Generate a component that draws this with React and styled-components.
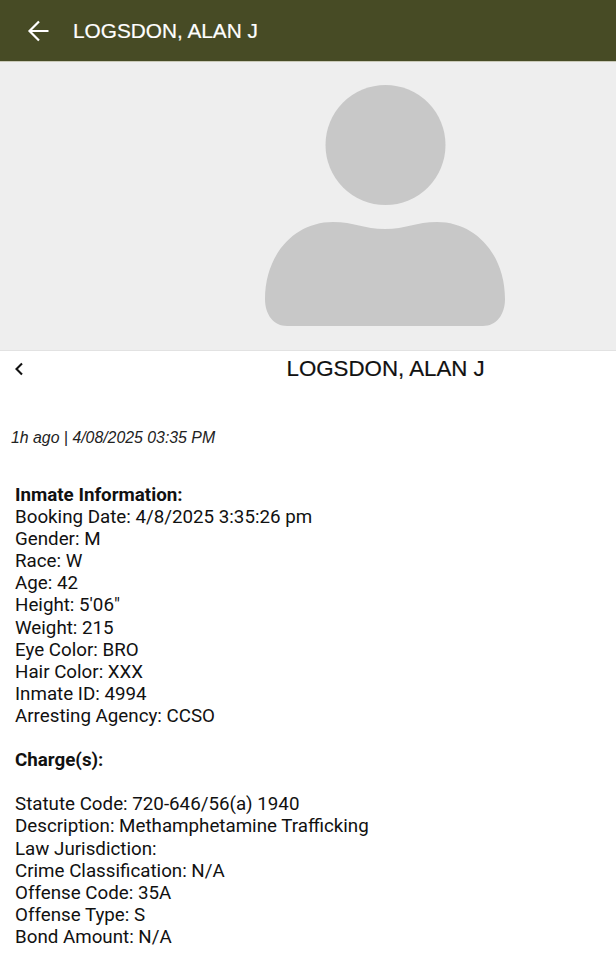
import React from "react";
import styled, { createGlobalStyle } from "styled-components";

const Global = createGlobalStyle`
  html, body { margin: 0; padding: 0; background: #fff; }
  body { font-family: Roboto, "Liberation Sans", sans-serif; color: #111; }
`;
const Page = styled.div`width: 616px; height: 960px; overflow: hidden; display: flex; flex-direction: column;`;
const AppBar = styled.header`
  height: 61px; background: #474b25; display: flex; align-items: center; padding-left: 26px; gap: 23px; flex: none;
  border-bottom: 1px solid #c9c9b8; box-sizing: content-box;
`;
const AppTitle = styled.h1`margin: 0; font-family: "Liberation Sans", Arial, sans-serif; font-size: 20.8px; font-weight: 400; color: #fff; white-space: nowrap; -webkit-text-stroke: 0.2px #fff;`;
const Hero = styled.div`
  height: 289px; background: #eeeeee; flex: none; display: flex; justify-content: center; padding-left: 154px; box-sizing: border-box; border-bottom: 1px solid #e2e2e2;
`;
const Heading = styled.div`
  height: 36px; display: flex; align-items: center; flex: none; padding-left: 13px;
`;
const Name = styled.h2`margin: 0 0 0 261.5px; font-family: "Liberation Sans", Arial, sans-serif; font-size: 22.3px; font-weight: 400; color: #111; white-space: nowrap; -webkit-text-stroke: 0.2px #111;`;
const Stamp = styled.div`font-family: "Liberation Sans", Arial, sans-serif; font-size: 15.85px; font-style: italic; margin: 41px 0 0 11px; line-height: 20px; color: #222;`;
const Info = styled.div`margin: 36px 0 0 15px; font-size: 18.75px; line-height: 22.1px; color: #111;`;
const Line = styled.div`min-height: 22.1px;`;
const Strong = styled(Line)`font-weight: 700;`;

const first = ["Booking Date: 4/8/2025 3:35:26 pm","Gender: M","Race: W","Age: 42","Height: 5'06\"","Weight: 215","Eye Color: BRO","Hair Color: XXX","Inmate ID: 4994","Arresting Agency: CCSO"];
const second = ["Statute Code: 720-646/56(a) 1940","Description: Methamphetamine Trafficking","Law Jurisdiction:","Crime Classification: N/A","Offense Code: 35A","Offense Type: S","Bond Amount: N/A"];

export default function App() {
  return (
    <Page>
      <Global />
      <AppBar>
        <svg width="24" height="24" viewBox="0 0 24 24" fill="none" stroke="#fff" strokeWidth="2.2"><path d="M22.5 12H3.5M13 2.5L3.5 12l9.5 9.5" /></svg>
        <AppTitle>LOGSDON, ALAN J</AppTitle>
      </AppBar>
      <Hero>
        <svg width="242" height="242" viewBox="0 0 242 242" style={{ marginTop: 23 }}>
          <circle cx="121.5" cy="60" r="60" fill="#c8c8c8" />
          <path d="M1 214C1 170 30 137 69 137C90 137 100 144 121 144C142 144 152 137 173 137C212 137 241 170 241 214C241 230 232 241 219 241H23C10 241 1 230 1 214Z" fill="#c8c8c8" />
        </svg>
      </Hero>
      <Heading>
        <svg width="12" height="14" viewBox="0 0 12 14" fill="none" stroke="#111" strokeWidth="2.1"><path d="M9 1.5L3.5 7 9 12.5" /></svg>
        <Name>LOGSDON, ALAN J</Name>
      </Heading>
      <Stamp>1h ago | 4/08/2025 03:35 PM</Stamp>
      <Info>
        <Strong>Inmate Information:</Strong>
        {first.map((t) => <Line key={t}>{t}</Line>)}
        <Line />
        <Strong>Charge(s):</Strong>
        <Line />
        {second.map((t) => <Line key={t}>{t}</Line>)}
      </Info>
    </Page>
  );
}
